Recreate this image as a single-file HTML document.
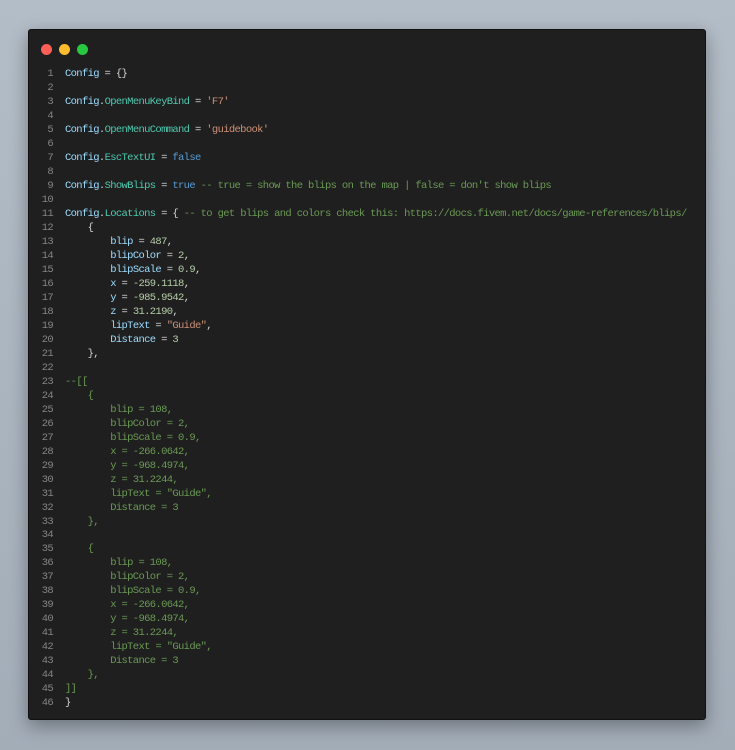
<!DOCTYPE html>
<html><head><meta charset="utf-8"><style>
html,body{margin:0;padding:0}
body{width:735px;height:750px;background:linear-gradient(#b3bdc7,#a3adb8);position:relative;overflow:hidden}
.win{position:absolute;left:28px;top:29px;width:678px;height:691px;background:#1f1f1f;border:1px solid #111;border-radius:3px;box-shadow:0 6px 18px rgba(0,0,0,.35);box-sizing:border-box}
.dot{position:absolute;top:14px;width:11px;height:11px;border-radius:50%}
pre{margin:0;position:absolute;top:38px;font-family:"Liberation Mono",monospace;font-size:10.5px;letter-spacing:-0.65px;line-height:13.98px;color:#d4d4d4}
.ln{left:0;width:24px;text-align:right;color:#858585}
.code{left:36px}
.v{color:#9cdcfe}.p{color:#4ec9b0}.s{color:#ce9178}.k{color:#569cd6}.c{color:#6a9955}.n{color:#b5cea8}
</style></head><body>
<div class="win">
<div class="dot" style="left:12px;background:#ff5f57"></div>
<div class="dot" style="left:30px;background:#febc2e"></div>
<div class="dot" style="left:48px;background:#28c840"></div>
<pre class="ln">1
2
3
4
5
6
7
8
9
10
11
12
13
14
15
16
17
18
19
20
21
22
23
24
25
26
27
28
29
30
31
32
33
34
35
36
37
38
39
40
41
42
43
44
45
46</pre>
<pre class="code"><span class="v">Config</span> = {}

<span class="v">Config</span>.<span class="p">OpenMenuKeyBind</span> = <span class="s">'F7'</span>

<span class="v">Config</span>.<span class="p">OpenMenuCommand</span> = <span class="s">'guidebook'</span>

<span class="v">Config</span>.<span class="p">EscTextUI</span> = <span class="k">false</span>

<span class="v">Config</span>.<span class="p">ShowBlips</span> = <span class="k">true</span> <span class="c">-- true = show the blips on the map | false = don't show blips</span>

<span class="v">Config</span>.<span class="p">Locations</span> = { <span class="c">-- to get blips and colors check this: https://docs.fivem.net/docs/game-references/blips/</span>
    {
        <span class="v">blip</span> = <span class="n">487</span>,
        <span class="v">blipColor</span> = <span class="n">2</span>,
        <span class="v">blipScale</span> = <span class="n">0.9</span>,
        <span class="v">x</span> = <span class="n">-259.1118</span>,
        <span class="v">y</span> = <span class="n">-985.9542</span>,
        <span class="v">z</span> = <span class="n">31.2190</span>,
        <span class="v">lipText</span> = <span class="s">"Guide"</span>,
        <span class="v">Distance</span> = <span class="n">3</span>
    },

<span class="c">--[[
    {
        blip = 108,
        blipColor = 2,
        blipScale = 0.9,
        x = -266.0642,
        y = -968.4974,
        z = 31.2244,
        lipText = "Guide",
        Distance = 3
    },

    {
        blip = 108,
        blipColor = 2,
        blipScale = 0.9,
        x = -266.0642,
        y = -968.4974,
        z = 31.2244,
        lipText = "Guide",
        Distance = 3
    },
]]</span>
}</pre>
</div>
</body></html>
